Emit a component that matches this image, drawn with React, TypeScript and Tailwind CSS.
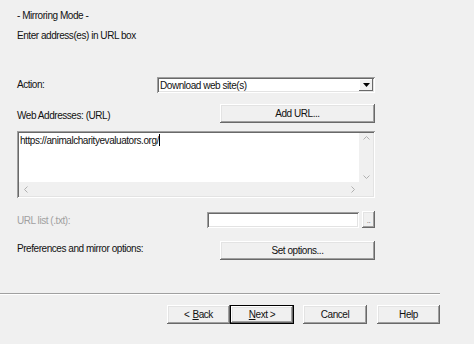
import React from "react";

const raised =
  "bg-[#f0f0f0] shadow-[inset_-1px_-1px_#696969,inset_1px_1px_#ffffff,inset_-2px_-2px_#a0a0a0,inset_2px_2px_#e3e3e3]";
const sunken =
  "bg-white shadow-[inset_1px_1px_#a0a0a0,inset_-1px_-1px_#ffffff,inset_2px_2px_#696969,inset_-2px_-2px_#e3e3e3]";

function Btn({ children, className = "" }: { children: React.ReactNode; className?: string }) {
  return (
    <div className={`flex items-center justify-center h-[19px] ${raised} ${className}`}>
      {children}
    </div>
  );
}

export default function App() {
  return (
    <div
      className="relative w-[474px] h-[344px] bg-[#f0f0f0] text-[#111] text-[10px] leading-[13px] tracking-[-0.45px] overflow-hidden"
      style={{ fontFamily: '"Liberation Sans", Arial, sans-serif' }}
    >
      <div className="flex flex-col pl-[17px] pt-[9px] w-[375px]">
        <div>- Mirroring Mode -</div>
        <div className="mt-[7px]">Enter address(es) in URL box</div>

        <div className="mt-[35px] flex items-center h-[15px]">
          <div className="w-[140px]">Action:</div>
          <div className={`flex items-center h-[16px] w-[218px] ${sunken}`}>
            <div className="flex-1 pl-[3px] pt-[1px]">Download web site(s)</div>
            <div className="flex items-center justify-center w-[14px] h-[12px] mr-[2px] bg-[#f0f0f0] shadow-[inset_-1px_-1px_#696969,inset_1px_1px_#ffffff]">
              <svg width="7" height="4" viewBox="0 0 7 4">
                <path d="M0 0h7L3.5 4z" fill="#000" />
              </svg>
            </div>
          </div>
        </div>

        <div className="mt-[12px] flex items-end h-[19px]">
          <div className="w-[203px] pb-[1px]">Web Addresses: (URL)</div>
          <Btn className="w-[155px]">Add URL...</Btn>
        </div>

        <div className={`mt-[8px] h-[67px] w-[358px] flex flex-col p-[2px] ${sunken}`}>
          <div className="flex flex-1">
            <div className="flex-1 pl-[1px] pt-[1px] bg-white">
              https://animalcharityevaluators.org/<span className="inline-block w-px h-[12px] bg-black align-[-2px]" />
            </div>
            <div className="w-[14px] bg-[#f0f0f0] flex flex-col items-center justify-between py-[3px]">
              <svg width="7" height="4" viewBox="0 0 7 4"><path d="M0.5 3.5L3.5 0.5L6.5 3.5" stroke="#b0b0b0" fill="none" /></svg>
              <svg width="7" height="4" viewBox="0 0 7 4"><path d="M0.5 0.5L3.5 3.5L6.5 0.5" stroke="#b0b0b0" fill="none" /></svg>
            </div>
          </div>
          <div className="h-[14px] bg-[#f0f0f0] flex items-center justify-between pl-[5px] pr-[18px]">
            <svg width="4" height="7" viewBox="0 0 4 7"><path d="M3.5 0.5L0.5 3.5L3.5 6.5" stroke="#b0b0b0" fill="none" /></svg>
            <svg width="4" height="7" viewBox="0 0 4 7"><path d="M0.5 0.5L3.5 3.5L0.5 6.5" stroke="#b0b0b0" fill="none" /></svg>
          </div>
        </div>

        <div className="mt-[13px] flex items-center h-[17px]">
          <div className="w-[190px] text-[#a0a0a0] pt-[1px]">URL list (.txt):</div>
          <div className={`h-[16px] w-[152px] ${sunken}`} />
          <div className={`ml-[3px] w-[13px] h-[17px] flex items-end justify-center pb-[3px] ${raised}`}>
            <span className="text-[8px] leading-[8px] text-[#6d6d6d]">..</span>
          </div>
        </div>

        <div className="mt-[13px] flex items-start h-[19px]">
          <div className="w-[203px] pt-[1px]">Preferences and mirror options:</div>
          <Btn className="w-[155px]">Set options...</Btn>
        </div>
      </div>

      <div className="mt-[33px] w-[440px] h-[2px] border-t border-[#a0a0a0] border-b border-b-white" />

      <div className="mt-[10px] flex pl-[167px]">
        <Btn className="w-[63px]">
          &lt; <span className="underline ml-[3px]">B</span>ack
        </Btn>
        <div className="w-[64px] h-[19px] border border-black">
          <div className={`flex items-center justify-center h-full ${raised}`}>
            <span className="underline">N</span>ext &gt;
          </div>
        </div>
        <Btn className="ml-[9px] w-[64px]">Cancel</Btn>
        <Btn className="ml-[10px] w-[63px]">Help</Btn>
      </div>
    </div>
  );
}
